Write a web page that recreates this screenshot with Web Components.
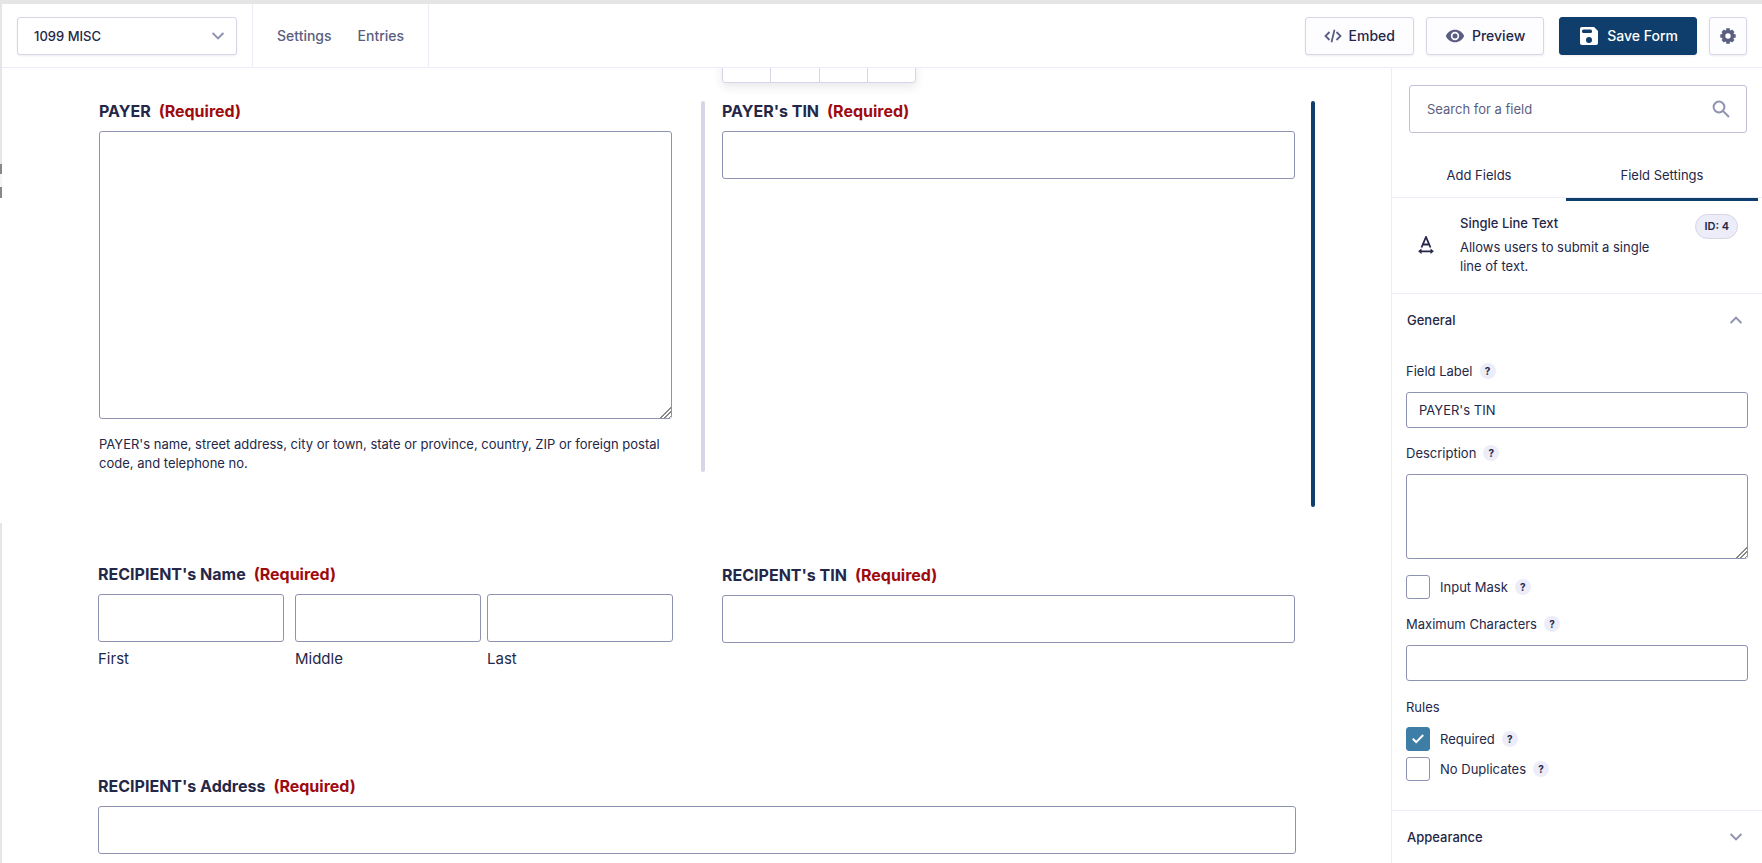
<!DOCTYPE html>
<html lang="en">
<head>
<meta charset="utf-8">
<title>1099 MISC</title>
<style>
    html, body {
        margin: 0;
        height: 100%;
    }

    body {
        --ink: #242748;
        --muted: #5b5e80;
        --outline: #9092b2;
        --outline-light: #d5d7e9;
        --line: #ecedf8;
        --navy: #0f3e6c;
        font-family: Inter, "Liberation Sans", sans-serif;
        font-size: 13px;
        color: var(--ink);
        background: #fff;
        overflow: hidden;
    }
</style>
</head>
<body>
<form-editor></form-editor>

<script>
const ICONS = {
    code: `<svg width="18" height="14" viewBox="0 0 18 14" fill="none" stroke="currentColor" stroke-width="1.8"><path d="M5.5 3 1.5 7l4 4M12.5 3l4 4-4 4M10.5 .8l-3 12.4"/></svg>`,
    eye: `<svg width="20" height="20" viewBox="0 0 24 24" fill="currentColor"><path d="M12 4.5C7 4.5 2.7 7.6 1 12c1.700 4.400 6 7.500 11 7.500s9.300-3.100 11-7.500c-1.700-4.400-6-7.500-11-7.500zM12 17a5 5 0 1 1 0-10 5 5 0 0 1 0 10zm0-8a3 3 0 1 0 0 6 3 3 0 0 0 0-6z"/></svg>`,
    save: `<svg width="18" height="18" viewBox="0 0 18 18"><path fill="#fff" d="M2 0h12l4 4v12a2 2 0 0 1-2 2H2a2 2 0 0 1-2-2V2a2 2 0 0 1 2-2z"/><rect x="2" y="2.500" width="10" height="3.500" rx="1.500" fill="#0f3e6c"/><circle cx="9" cy="13" r="3" fill="#0f3e6c"/></svg>`,
    gear: `<svg width="16" height="16" viewBox="0 0 16 16"><g stroke="currentColor" stroke-width="3.600"><path d="M8 .3v15.400M.3 8h15.400M2.700 2.700l10.600 10.600M13.300 2.700 2.700 13.300"/></g><circle cx="8" cy="8" r="6.200" fill="currentColor"/><circle cx="8" cy="8" r="2.700" fill="#fff"/></svg>`,
    search: `<svg width="18" height="18" viewBox="0 0 18 18" fill="none" stroke="currentColor" stroke-width="2"><circle cx="7" cy="7" r="5.400"/><path d="m10.900 10.900 6.100 6.100"/></svg>`,
    down: `<svg width="12" height="8" viewBox="0 0 12 8" fill="none" stroke="currentColor" stroke-width="2"><path d="m.6 1 5.400 5.400L11.400 1"/></svg>`,
    up: `<svg width="12" height="8" viewBox="0 0 12 8" fill="none" stroke="currentColor" stroke-width="2"><path d="m.6 7 5.400-5.400L11.400 7"/></svg>`,
    text: `<svg width="16" height="18" viewBox="0 0 16 18" fill="none" stroke="currentColor" stroke-width="1.800"><path d="M3.500 11.500 8 1l4.500 10.500M5 8.500h6M2 15.300h12"/><path d="M3.500 12.600.1 15.300 3.500 18zM12.500 12.600l3.400 2.700-3.400 2.700z" fill="currentColor" stroke="none"/></svg>`
};

const RESET = `
    *, *::before, *::after { box-sizing: border-box; }
    button, input, textarea, select { font: inherit; color: inherit; margin: 0; }
    svg { display: block; flex: none; }
    textarea::-webkit-resizer {
        background:
            linear-gradient(135deg, #fff 50%, transparent 50%) 100% 100% / 12px 12px no-repeat,
            repeating-linear-gradient(135deg, #888 0 1px, #fff 1px 3px) 100% 100% / 12px 12px no-repeat;
    }
`;

// Round "?" button placed next to a setting's label
class HelpTip extends HTMLElement {
    connectedCallback() {
        this.attachShadow({ mode: 'open' }).innerHTML = `
            <style>
                ${RESET}
                :host { display: block; flex: none; }
                button {
                    display: block;
                    width: 16px;
                    height: 16px;
                    padding: 0;
                    border: 0;
                    border-radius: 50%;
                    background: var(--line);
                    font-size: 10px;
                    line-height: 16px;
                    font-weight: 700;
                    text-align: center;
                }
            </style>
            <button type="button">?</button>
        `;
    }
}

class ToolButton extends HTMLElement {
    connectedCallback() {
        this.attachShadow({ mode: 'open' }).innerHTML = `
            <style>
                ${RESET}
                :host { display: block; }
                button {
                    display: flex;
                    align-items: center;
                    justify-content: center;
                    gap: 7px;
                    height: 38px;
                    min-width: 38px;
                    padding: 0 18px;
                    border: 1px solid var(--outline-light);
                    border-radius: 3px;
                    background: #fdfdff;
                    box-shadow: 0 1px 2px rgba(36, 39, 72, .08);
                    font-size: 14px;
                    font-weight: 500;
                }
                svg { color: var(--muted); }
                :host([primary]) button {
                    padding: 0 18px 0 20px;
                    gap: 9px;
                    border-color: var(--navy);
                    background: var(--navy);
                    color: #fff;
                }
                :host([square]) button { padding: 0; }
            </style>
            <button type="button">${ICONS[this.getAttribute('icon')]}<slot></slot></button>
        `;
        if (this.hasAttribute('square')) {
            const button = this.shadowRoot.querySelector('button');
            button.setAttribute('aria-label', 'Options');
            button.querySelector('slot').remove();
        }
    }
}

class TopBar extends HTMLElement {
    connectedCallback() {
        this.attachShadow({ mode: 'open' }).innerHTML = `
            <style>
                ${RESET}
                :host {
                    display: flex;
                    flex: none;
                    height: 64px;
                    border-bottom: 1px solid var(--line);
                    background: #fff;
                }
                .form, nav {
                    display: flex;
                    align-items: center;
                    border-right: 1px solid var(--line);
                }
                .form { padding: 0 15px; }
                .picker { display: grid; align-items: center; }
                .picker > * { grid-area: 1 / 1; }
                .picker svg {
                    justify-self: end;
                    margin-right: 13px;
                    color: var(--outline);
                    pointer-events: none;
                }
                select {
                    appearance: none;
                    width: 220px;
                    height: 38px;
                    padding: 0 16px;
                    border: 1px solid var(--outline-light);
                    border-radius: 3px;
                    background: #fff;
                    box-shadow: 0 1px 2px rgba(36, 39, 72, .08);
                    font-weight: 500;
                }
                nav { padding: 0 24px; gap: 26px; }
                a {
                    color: var(--muted);
                    font-size: 14px;
                    font-weight: 500;
                    text-decoration: none;
                }
                .actions {
                    display: flex;
                    align-items: center;
                    gap: 12px;
                    margin-left: auto;
                    padding-right: 15px;
                }
                .actions [primary] { margin-left: 3px; }
            </style>
            <div class="form">
                <div class="picker">
                    <select aria-label="Form"><option>1099 MISC</option></select>
                    ${ICONS.down}
                </div>
            </div>
            <nav>
                <a href="#settings">Settings</a>
                <a href="#entries">Entries</a>
            </nav>
            <div class="actions">
                <tool-button icon="code">Embed</tool-button>
                <tool-button icon="eye">Preview</tool-button>
                <tool-button icon="save" primary>Save Form</tool-button>
                <tool-button icon="gear" square></tool-button>
            </div>
        `;
    }
}

// A field on the form canvas: type is text, textarea or name
class CanvasField extends HTMLElement {
    connectedCallback() {
        this.attachShadow({ mode: 'open' }).innerHTML = `
            <style>
                ${RESET}
                :host {
                    display: block;
                    position: relative;
                    flex: 1 1 2px;
                    min-width: 0;
                }
                :host([inset]) { padding: 1px; }
                .title {
                    display: flex;
                    gap: 8px;
                    margin-bottom: 10px;
                    font-size: 16px;
                    line-height: 20px;
                    font-weight: 700;
                }
                .required { color: #9e0b0f; }
                input, textarea {
                    display: block;
                    width: 100%;
                    height: 48px;
                    padding: 8px;
                    border: 1px solid var(--outline);
                    border-radius: 3px;
                    background: #fff;
                }
                textarea { height: 288px; }
                .parts { display: flex; gap: 6px; }
                .parts div { flex: 1 1 0; min-width: 0; }
                .parts div:first-child { margin-right: 5px; }
                .parts label {
                    display: block;
                    margin-top: 7px;
                    font-size: 15px;
                    line-height: 20px;
                }
                ::slotted(p) {
                    margin: 16px 0 0;
                    line-height: 19px;
                }
                .toolbar {
                    position: absolute;
                    left: 1px;
                    bottom: calc(100% + 17px);
                    display: flex;
                    width: 194px;
                    height: 40px;
                    border: 1px solid var(--outline-light);
                    border-radius: 3px;
                    background: #fff;
                    box-shadow: 0 4px 10px rgba(36, 39, 72, .1);
                }
                .toolbar button {
                    flex: 1;
                    border: 0;
                    background: none;
                }
                .toolbar button + button { border-left: 1px solid var(--outline-light); }
            </style>
            ${this.hasAttribute('selected') ? this.toolbar() : ''}
            <label class="title" for="control">
                <span>${this.getAttribute('label')}</span>
                <span class="required">(Required)</span>
            </label>
            ${this.control()}
            <slot></slot>
        `;
    }

    toolbar() {
        const names = ['Move', 'Duplicate', 'Settings', 'Delete'];
        return `<div class="toolbar">${names.map(n => `<button type="button" aria-label="${n}"></button>`).join('')}</div>`;
    }

    control() {
        switch (this.getAttribute('type')) {
            case 'textarea':
                return '<textarea id="control"></textarea>';
            case 'name':
                return `
                    <div class="parts">
                        <div><input id="control" aria-labelledby="first"><label id="first" for="control">First</label></div>
                        <div><input id="middle"><label for="middle">Middle</label></div>
                        <div><input id="last"><label for="last">Last</label></div>
                    </div>`;
            default:
                return '<input id="control" type="text">';
        }
    }
}

class FormCanvas extends HTMLElement {
    connectedCallback() {
        this.attachShadow({ mode: 'open' }).innerHTML = `
            <style>
                ${RESET}
                :host {
                    display: block;
                    flex: 1;
                    min-width: 0;
                    padding: 32px 76px 0 96px;
                    overflow: hidden;
                }
                .row { display: flex; }
                .row.spaced {
                    gap: 48px;
                    margin-top: 57px;
                    padding-right: 19px;
                }
                .row.last { margin-top: 107px; padding-right: 19px; }
                .described { padding-bottom: 34px; }
                .rail {
                    flex: none;
                    width: 4px;
                    margin: 1px 16px 35px 28px;
                    border-radius: 2px;
                    background: var(--outline-light);
                }
                .rail.active { margin: 1px 0 0 15px; background: var(--navy); }
            </style>
            <div class="row">
                <canvas-field class="described" label="PAYER" type="textarea" inset>
                    <p>PAYER's name, street address, city or town, state or province, country, ZIP or foreign postal code, and telephone no.</p>
                </canvas-field>
                <div class="rail"></div>
                <canvas-field label="PAYER's TIN" selected inset></canvas-field>
                <div class="rail active"></div>
            </div>
            <div class="row spaced">
                <canvas-field label="RECIPIENT's Name" type="name"></canvas-field>
                <canvas-field label="RECIPENT's TIN" inset></canvas-field>
            </div>
            <div class="row last">
                <canvas-field label="RECIPIENT's Address"></canvas-field>
            </div>
        `;
    }
}

// Labelled text box or textarea in the settings panel
class SettingInput extends HTMLElement {
    connectedCallback() {
        const multiline = this.hasAttribute('multiline');
        this.attachShadow({ mode: 'open' }).innerHTML = `
            <style>
                ${RESET}
                :host { display: block; }
                .head {
                    display: flex;
                    align-items: center;
                    gap: 7px;
                    margin-bottom: 12px;
                    line-height: 18px;
                }
                input, textarea {
                    display: block;
                    width: 100%;
                    height: 36px;
                    padding: 0 12px;
                    border: 1px solid var(--outline);
                    border-radius: 3px;
                    background: #fff;
                }
                textarea { height: 85px; padding: 8px 12px; }
            </style>
            <div class="head">
                <label for="control">${this.getAttribute('label')}</label>
                <help-tip></help-tip>
            </div>
            ${multiline
                ? '<textarea id="control"></textarea>'
                : `<input id="control" type="text" value="${this.getAttribute('value') || ''}">`}
        `;
    }
}

class SettingCheck extends HTMLElement {
    connectedCallback() {
        this.attachShadow({ mode: 'open' }).innerHTML = `
            <style>
                ${RESET}
                :host {
                    display: flex;
                    align-items: center;
                    gap: 7px;
                }
                .box { display: grid; place-items: center; margin-right: 3px; }
                .box > * { grid-area: 1 / 1; }
                input {
                    appearance: none;
                    width: 24px;
                    height: 24px;
                    border: 1px solid var(--outline);
                    border-radius: 3px;
                    background: #fff;
                }
                input:checked { border-color: #3e7da6; background: #3e7da6; }
                svg { visibility: hidden; pointer-events: none; }
                input:checked + svg { visibility: visible; }
            </style>
            <span class="box">
                <input id="control" type="checkbox" ${this.hasAttribute('checked') ? 'checked' : ''}>
                <svg width="12" height="10" viewBox="0 0 12 10" fill="none" stroke="#fff" stroke-width="2"><path d="m.8 4.800 3.400 3.400L11.200 1"/></svg>
            </span>
            <label for="control">${this.getAttribute('label')}</label>
            <help-tip></help-tip>
        `;
    }
}

class SettingsSection extends HTMLElement {
    connectedCallback() {
        const open = this.hasAttribute('open');
        this.attachShadow({ mode: 'open' }).innerHTML = `
            <style>
                ${RESET}
                :host { display: block; border-top: 1px solid var(--line); }
                button {
                    display: flex;
                    align-items: center;
                    justify-content: space-between;
                    width: 100%;
                    height: 52px;
                    padding: 0 20px 0 15px;
                    border: 0;
                    background: none;
                    font-weight: 500;
                }
                svg { color: var(--outline); }
                .content { padding: 16px 14px 29px; }
            </style>
            <button type="button" aria-expanded="${open}">
                <span>${this.getAttribute('heading')}</span>
                ${open ? ICONS.up : ICONS.down}
            </button>
            ${open ? '<div class="content"><slot></slot></div>' : ''}
        `;
    }
}

class SettingsPanel extends HTMLElement {
    connectedCallback() {
        this.attachShadow({ mode: 'open' }).innerHTML = `
            <style>
                ${RESET}
                :host {
                    display: block;
                    flex: none;
                    width: 371px;
                    border-left: 1px solid var(--line);
                    overflow: hidden;
                }
                .search {
                    display: flex;
                    align-items: center;
                    height: 48px;
                    margin: 17px 15px 0 17px;
                    padding: 0 16px 0 17px;
                    border: 1px solid #c0c2da;
                    border-radius: 3px;
                    color: var(--outline);
                }
                .search input {
                    flex: 1;
                    min-width: 0;
                    padding: 0;
                    border: 0;
                    outline: 0;
                    background: none;
                }
                .search input::placeholder { color: var(--muted); opacity: 1; }
                .tabs {
                    display: flex;
                    align-items: flex-start;
                    height: 68px;
                    padding-right: 4px;
                    border-bottom: 3px solid transparent;
                    background: linear-gradient(var(--line), var(--line)) 0 100% / 100% 1px no-repeat padding-box;
                }
                .tabs button {
                    flex: 174;
                    height: 68px;
                    padding: 20px 0 4px;
                    border: 0;
                    background: none;
                }
                .tabs .active {
                    flex: 192;
                    box-shadow: inset 0 -3px var(--navy);
                }
                .about {
                    display: flex;
                    gap: 26px;
                    height: 92px;
                    padding: 13px 24px 0 26px;
                }
                .about svg { margin-top: 22px; }
                .about div { flex: 1; }
                h2 {
                    margin: 0 0 5px;
                    font-size: 13px;
                    line-height: 19px;
                    font-weight: 500;
                }
                .about p { margin: 0; line-height: 19px; }
                .id {
                    height: 25px;
                    padding: 0 8px;
                    border: 1px solid var(--outline-light);
                    border-radius: 13px;
                    background: var(--line);
                    font-size: 11px;
                    line-height: 23px;
                    font-weight: 600;
                }
                setting-input[multiline] { margin: 16px 0; }
                setting-check + setting-input { margin-top: 16px; }
                fieldset {
                    min-width: 0;
                    margin: 17px 0 0;
                    padding: 0;
                    border: 0;
                }
                legend { padding: 0; margin-bottom: 11px; line-height: 18px; }
                fieldset setting-check + setting-check { margin-top: 6px; }
            </style>
            <div class="search">
                <input type="text" placeholder="Search for a field" aria-label="Search for a field">
                ${ICONS.search}
            </div>
            <div class="tabs" role="tablist">
                <button type="button" role="tab">Add Fields</button>
                <button type="button" role="tab" class="active" aria-selected="true">Field Settings</button>
            </div>
            <div class="about">
                ${ICONS.text}
                <div>
                    <h2>Single Line Text</h2>
                    <p>Allows users to submit a single line of text.</p>
                </div>
                <span class="id">ID: 4</span>
            </div>
            <settings-section heading="General" open>
                <setting-input label="Field Label" value="PAYER's TIN"></setting-input>
                <setting-input label="Description" multiline></setting-input>
                <setting-check label="Input Mask"></setting-check>
                <setting-input label="Maximum Characters"></setting-input>
                <fieldset>
                    <legend>Rules</legend>
                    <setting-check label="Required" checked></setting-check>
                    <setting-check label="No Duplicates"></setting-check>
                </fieldset>
            </settings-section>
            <settings-section heading="Appearance"></settings-section>
        `;
    }
}

class FormEditor extends HTMLElement {
    connectedCallback() {
        this.attachShadow({ mode: 'open' }).innerHTML = `
            <style>
                ${RESET}
                :host {
                    display: flex;
                    height: 100vh;
                    box-sizing: border-box;
                    border-top: 4px solid #e5e5e5;
                }
                /* sliver of the admin menu behind the editor */
                .edge {
                    flex: none;
                    width: 2px;
                    background: linear-gradient(#e5e5e5 160px, #888 160px 170px, #f5f5f5 170px 183px, #888 183px 194px, #fff 194px 519px, #e5e5e5 519px);
                }
                .editor {
                    display: flex;
                    flex-direction: column;
                    flex: 1;
                    min-width: 0;
                }
                main { display: flex; flex: 1; min-height: 0; }
            </style>
            <div class="edge"></div>
            <div class="editor">
                <top-bar></top-bar>
                <main>
                    <form-canvas></form-canvas>
                    <settings-panel></settings-panel>
                </main>
            </div>
        `;
    }
}

customElements.define('help-tip', HelpTip);
customElements.define('tool-button', ToolButton);
customElements.define('top-bar', TopBar);
customElements.define('canvas-field', CanvasField);
customElements.define('form-canvas', FormCanvas);
customElements.define('setting-input', SettingInput);
customElements.define('setting-check', SettingCheck);
customElements.define('settings-section', SettingsSection);
customElements.define('settings-panel', SettingsPanel);
customElements.define('form-editor', FormEditor);
</script>
</body>
</html>
